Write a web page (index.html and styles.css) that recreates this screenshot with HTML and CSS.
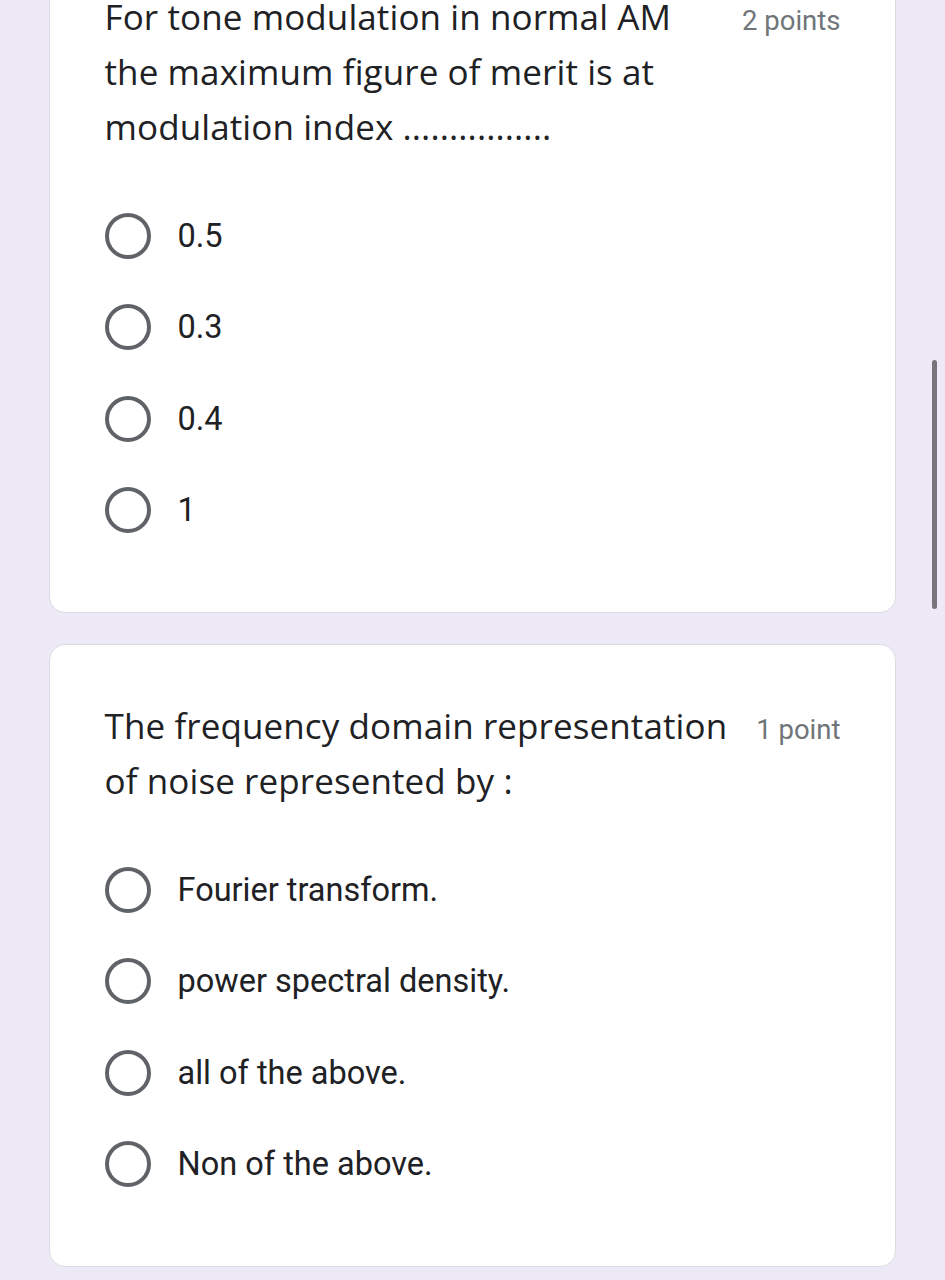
FILE: index.html
```html
<!DOCTYPE html>
<html>
<head>
<meta charset="utf-8">
<link rel="stylesheet" href="styles.css">
</head>
<body>
<div class="page">
  <div class="card first">
    <div class="qhead">
      <div class="qtext">For tone modulation in normal AM the maximum figure of merit is at modulation index ................</div>
      <div class="points">2 points</div>
    </div>
    <div class="options">
      <div class="opt"><span class="radio"></span><span class="label">0.5</span></div>
      <div class="opt"><span class="radio"></span><span class="label">0.3</span></div>
      <div class="opt"><span class="radio"></span><span class="label">0.4</span></div>
      <div class="opt"><span class="radio"></span><span class="label">1</span></div>
    </div>
  </div>
  <div class="card">
    <div class="qhead">
      <div class="qtext">The frequency domain representation of noise represented by :</div>
      <div class="points">1 point</div>
    </div>
    <div class="options">
      <div class="opt"><span class="radio"></span><span class="label">Fourier transform.</span></div>
      <div class="opt"><span class="radio"></span><span class="label">power spectral density.</span></div>
      <div class="opt"><span class="radio"></span><span class="label">all of the above.</span></div>
      <div class="opt"><span class="radio"></span><span class="label">Non of the above.</span></div>
    </div>
  </div>
</div>
<div class="scrollbar"></div>
</body>
</html>
```
FILE: styles.css
```css
html, body {
  margin: 0;
  padding: 0;
  background: #ede9f7;
  height: 100%;
  overflow: hidden;
}
body {
  font-family: Roboto, "Liberation Sans", sans-serif;
  color: #202124;
}
.page {
  margin: -65px 0 0 49px;
  width: 847px;
  display: flex;
  flex-direction: column;
  gap: 31px;
}
.card {
  background: #fff;
  border: 1.5px solid #dadce0;
  border-radius: 16px;
  padding: 53px 54.5px 56px 54.5px;
}
.qhead {
  display: flex;
  align-items: baseline;
  gap: 26px;
}
.qtext {
  flex: 1;
  font-family: "Open Sans", Roboto, sans-serif;
  font-size: 35px;
  line-height: 55px;
  letter-spacing: 0.1px;
}
.points {
  font-size: 27.5px;
  color: #70757a;
  white-space: nowrap;
}
.options {
  margin-top: 36px;
  display: flex;
  flex-direction: column;
}
.opt {
  height: 91.5px;
  display: flex;
  align-items: center;
  gap: 27px;
}
.radio {
  width: 38px;
  height: 38px;
  border: 4px solid #5f6368;
  border-radius: 50%;
  flex: none;
}
.label {
  font-size: 32.5px;
}
.scrollbar {
  position: fixed;
  left: 932px;
  top: 360px;
  width: 5px;
  height: 249px;
  border-radius: 3px;
  background: #77747c;
}
```
